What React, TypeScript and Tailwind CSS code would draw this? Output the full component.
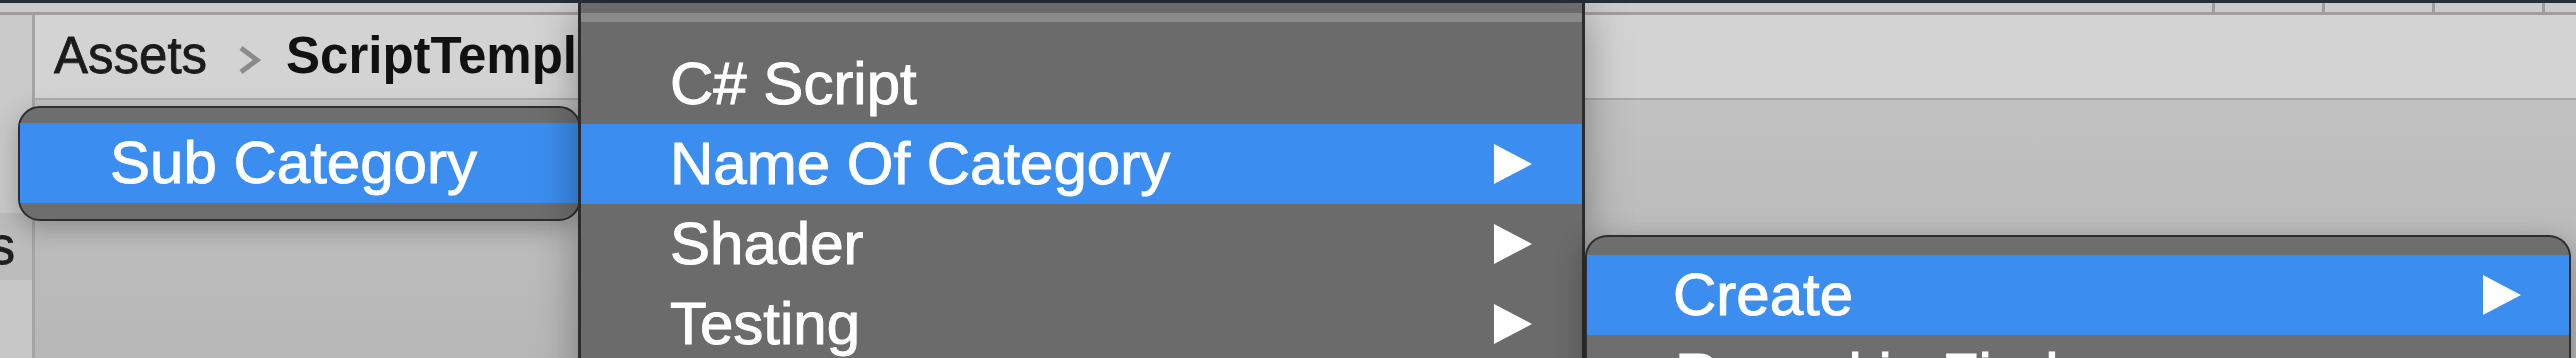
import React from "react";

const Arrow = () => (
  <svg width="38" height="40" viewBox="0 0 38 40" className="shrink-0">
    <path d="M0 0 L38 20 L0 40 Z" fill="#ffffff" />
  </svg>
);

const MenuRow = ({ label, active, arrow }: { label: string; active?: boolean; arrow?: boolean }) => (
  <div
    className={
      "h-[80px] flex items-center justify-between pl-[89px] pr-[50px] text-[60px] leading-[80px] text-white whitespace-nowrap [-webkit-text-stroke:1px_#ffffff] " +
      (active ? "bg-[#3b8ef0]" : "")
    }
  >
    <span>{label}</span>
    {arrow ? <Arrow /> : null}
  </div>
);

export default function App() {
  return (
    <div className="relative w-[2576px] h-[358px] overflow-hidden bg-[#c0c0c0] font-['Liberation_Sans',Arial,sans-serif]">
      {/* top dark strip */}
      <div className="h-[3px] bg-[#262e38]" />
      {/* tab strip */}
      <div className="h-[12px] flex bg-[#cbcbcb] border-b-[3px] border-[#9e9e9e]">
        <div className="flex-1" />
        <div className="w-[110px] border-l-[3px] border-[#9d9d9d]" />
        <div className="w-[110px] border-l-[3px] border-[#9d9d9d]" />
        <div className="w-[110px] border-l-[3px] border-[#9d9d9d]" />
        <div className="w-[34px] border-l-[3px] border-[#9d9d9d]" />
      </div>
      {/* body */}
      <div className="flex h-[343px]">
        <div className="w-[35px] border-r-[3px] border-[#a4a4a4] bg-[#c9c9c9] flex flex-col">
          <div className="h-[198px]" />
          <div className="h-[67px] bg-[#bcbcbc] overflow-hidden flex items-center justify-end pr-[17px]">
            <span className="whitespace-nowrap text-[51px] leading-none text-[#1e1e1e] [-webkit-text-stroke:0.8px_#1e1e1e]">Assets</span>
          </div>
          <div className="flex-1 bg-[#c6c6c6]" />
        </div>
        <div className="flex-1 flex flex-col">
          <div className="h-[85px] bg-[#d3d3d3] border-b-2 border-[#aaaaaa] flex items-center pl-[19px] whitespace-nowrap overflow-hidden">
            <span className="text-[51px] text-[#1b1b1b] [-webkit-text-stroke:0.8px_#1b1b1b]">Assets</span>
            <svg width="23" height="28" viewBox="0 0 23 28" className="ml-[31px] mt-[7px] shrink-0">
              <polyline points="3,2 19,14 3,26" fill="none" stroke="#8a8a8a" strokeWidth="5" />
            </svg>
            <span className="ml-[25px] text-[51px] font-bold text-[#111111]">ScriptTemplates</span>
          </div>
          <div className="flex-1 bg-gradient-to-b from-[#c1c1c1] to-[#b7b7b7]" />
        </div>
      </div>

      {/* Sub Category popup */}
      <div className="absolute left-[18px] top-[106px] w-[563px] rounded-[22px] border-2 border-[#2e2e2e] bg-[#6e6e6e] pt-[15px] pb-[16px] shadow-[0_8px_24px_rgba(0,0,0,0.25)]">
        <div className="h-[80px] bg-[#3b8ef0] pl-[90px] flex items-center text-[60px] leading-[80px] text-white whitespace-nowrap [-webkit-text-stroke:1px_#ffffff]">
          Sub Category
        </div>
      </div>

      {/* main menu */}
      <div className="absolute left-[578px] top-[3px] w-[1007px] h-[400px] bg-[#6b6b6b] border-x-[3px] border-[#2c2c2c] shadow-[0_10px_40px_rgba(0,0,0,0.35)]">
        <div className="h-[10px]" />
        <div className="h-[9px] bg-[#8a8a8a]" />
        <div className="h-[22px]" />
        <MenuRow label="C# Script" />
        <MenuRow label="Name Of Category" active arrow />
        <MenuRow label="Shader" arrow />
        <MenuRow label="Testing" arrow />
      </div>

      {/* Create popup */}
      <div className="absolute left-[1585px] top-[235px] w-[986px] h-[200px] rounded-t-[22px] border-2 border-b-0 border-[#2e2e2e] bg-[#6e6e6e] pt-[18px] shadow-[0_8px_30px_rgba(0,0,0,0.3)]">
        <div className="h-[80px] bg-[#3b8ef0] flex items-center justify-between pl-[86px] pr-[48px] text-[60px] leading-[80px] text-white whitespace-nowrap [-webkit-text-stroke:1px_#ffffff]">
          <span>Create</span>
          <Arrow />
        </div>
        <div className="h-[80px] flex items-center pl-[88px] text-[60px] leading-[80px] text-white whitespace-nowrap [-webkit-text-stroke:1px_#ffffff]">
          <span>Reveal in Finder</span>
        </div>
      </div>
    </div>
  );
}
